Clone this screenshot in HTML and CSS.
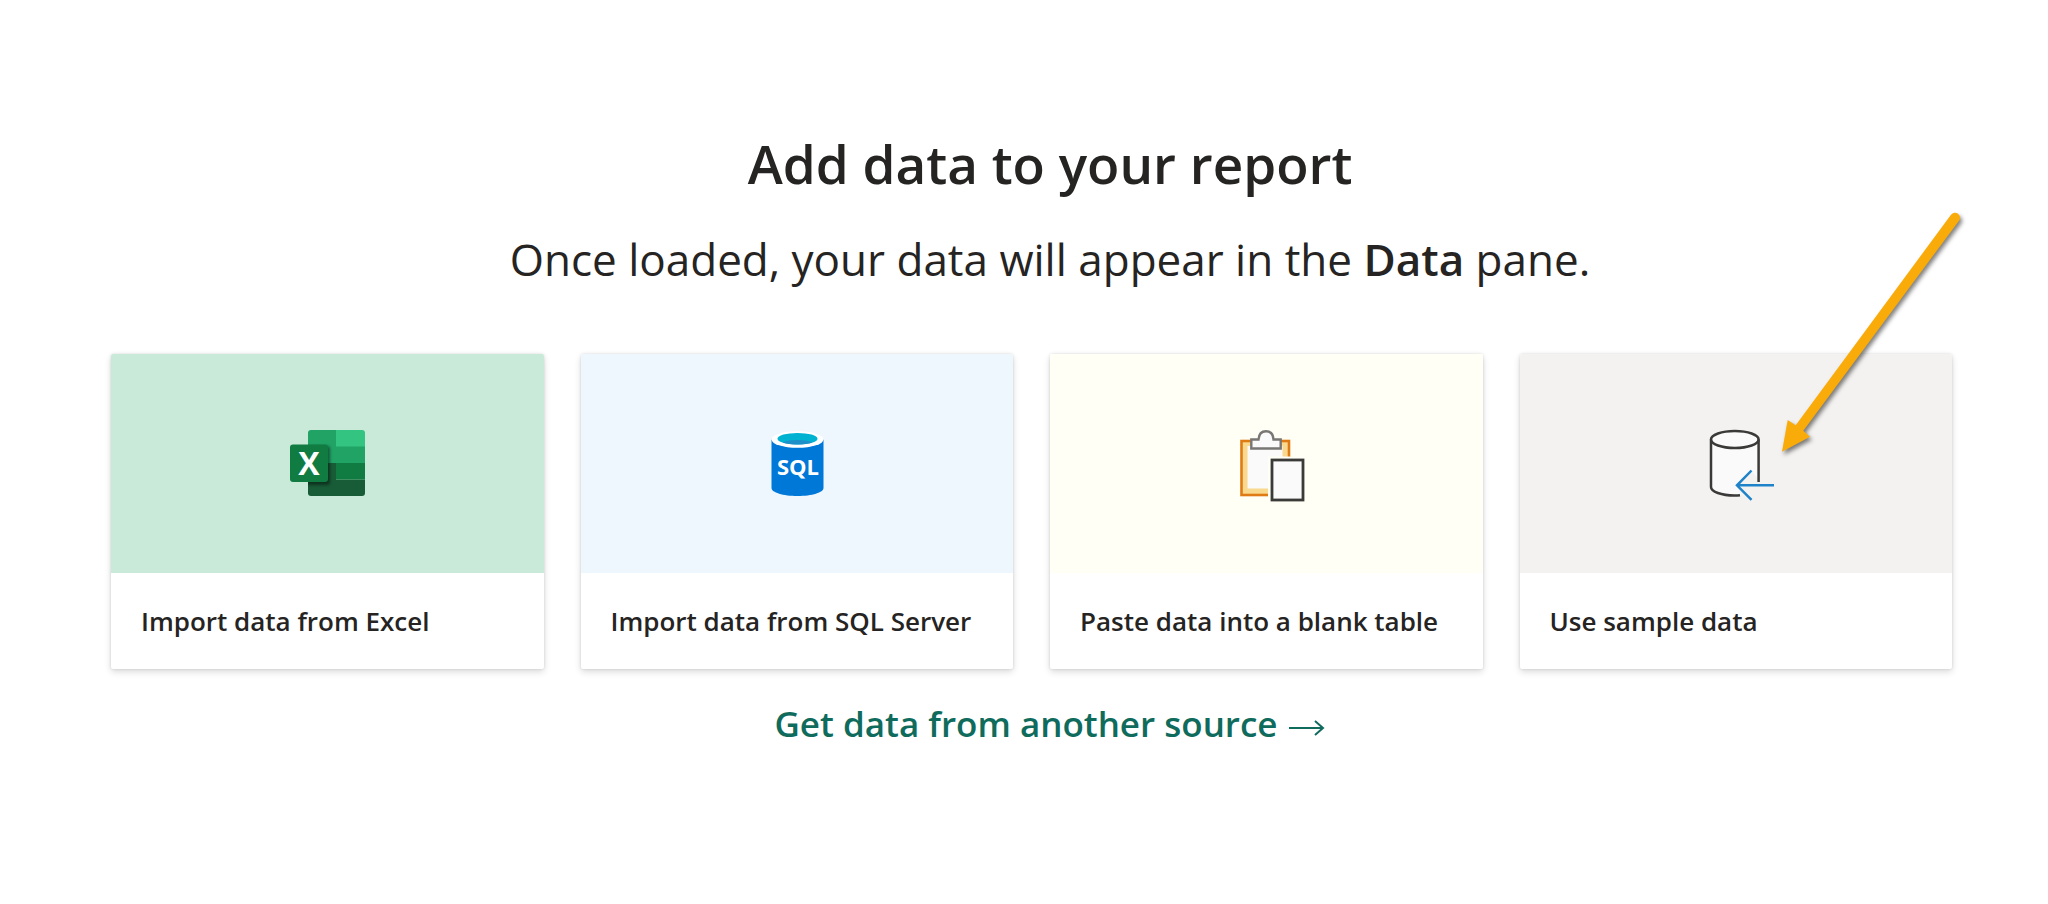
FILE: index.html
```html
<!DOCTYPE html>
<html lang="en">
<head>
<meta charset="utf-8">
<meta name="viewport" content="width=device-width, initial-scale=1">
<title>Add data to your report</title>
<link rel="stylesheet" href="styles.css">
</head>
<body>
<main class="start">
  <h1 class="title">Add data to your report</h1>
  <p class="subtitle">Once loaded, your data will appear in the <strong>Data</strong> pane.</p>
  <ul class="cards">
    <li class="card-item">
      <button class="card" type="button">
        <span class="art art-excel">
          <svg class="icon" viewBox="0 0 80 80" aria-hidden="true">
            <defs>
              <clipPath id="book"><rect x="21" y="6" width="57" height="66" rx="3"/></clipPath>
              <filter id="soft" x="-30%" y="-30%" width="160%" height="160%"><feGaussianBlur stdDeviation="1.5"/></filter>
            </defs>
            <g clip-path="url(#book)">
              <rect x="21" y="6" width="28" height="33" fill="#21a366"/>
              <rect x="49" y="6" width="29" height="17" fill="#33c481"/>
              <rect x="49" y="22.500" width="29" height="17" fill="#21a366"/>
              <rect x="21" y="39" width="28" height="17" fill="#107c41"/>
              <path d="M21 39h28v16.500h29V72H21z" fill="#185c37"/>
              <rect x="49" y="39" width="29" height="16.500" fill="#107c41"/>
              <rect x="10" y="22" width="33" height="39" rx="3" fill="#000" opacity=".45" filter="url(#soft)"/>
            </g>
            <rect x="3" y="20.500" width="38" height="37.500" rx="3" fill="#107c41"/>
            <text class="excel-letter" x="22" y="51" text-anchor="middle">X</text>
          </svg>
        </span>
        <span class="label">Import data from Excel</span>
      </button>
    </li>
    <li class="card-item">
      <button class="card" type="button">
        <span class="art art-sql">
          <svg class="icon" viewBox="0 0 80 80" aria-hidden="true">
            <path d="M14.500 15.500v48.500c0 4.500 11.600 8 26 8s26-3.500 26-8V15.500z" fill="#0078d7"/>
            <ellipse cx="40.500" cy="15.500" rx="26" ry="8.300" fill="#fff"/>
            <ellipse cx="40.500" cy="14.700" rx="20" ry="5.800" fill="#00b2d2"/>
            <path d="M25.500 18.500c8-3.200 22-3.200 30 0-7 2.700-23 2.700-30 0z" fill="#1d8fc9"/>
            <text class="sql-letters" x="41" y="51" text-anchor="middle">SQL</text>
          </svg>
        </span>
        <span class="label">Import data from SQL Server</span>
      </button>
    </li>
    <li class="card-item">
      <button class="card" type="button">
        <span class="art art-paste">
          <svg class="icon" viewBox="0 0 80 80" aria-hidden="true">
            <rect x="15.500" y="17" width="47.500" height="54" fill="#f9d98d" stroke="#df7b15" stroke-width="2.600"/>
            <rect x="21.500" y="22" width="35" height="42.500" fill="#fafafa"/>
            <path d="M25.300 15.500h7.200c.4-5.500 3.300-8.200 7.500-8.200s7.100 2.700 7.500 8.200h7.200v9H25.300z" fill="#fafafa" stroke="#797774" stroke-width="2.400"/>
            <path d="M42 32.500h26V74H42z" fill="#fffff6"/>
            <rect x="46" y="36" width="31" height="40" fill="#fafafa" stroke="#3a3a38" stroke-width="2.800"/>
          </svg>
        </span>
        <span class="label">Paste data into a blank table</span>
      </button>
    </li>
    <li class="card-item">
      <button class="card" type="button">
        <span class="art art-sample">
          <svg class="icon" viewBox="1 0 80 80" aria-hidden="true">
            <path d="M16 15.500V63c0 4.700 10.500 8.500 23.500 8.500l7-.5L41 61l15-14 7 7V15.500z" fill="#fafafa"/>
            <ellipse cx="39.800" cy="15.500" rx="23.800" ry="8.500" fill="#fafafa" stroke="#3a3a38" stroke-width="2.500"/>
            <path d="M16 15.500V63c0 4.700 10.500 8.500 23.500 8.500 2 0 4-.1 5.500-.3M63.600 15.500V58" fill="none" stroke="#3a3a38" stroke-width="2.500"/>
            <path d="M79 61.300H42M56.500 46.500 42 61.300l14.500 14.500" fill="none" stroke="#1e83c9" stroke-width="2.500"/>
          </svg>
        </span>
        <span class="label">Use sample data</span>
      </button>
      <svg class="pointer" viewBox="0 0 200 260" aria-hidden="true">
        <path d="M179 7.700 23.700 218.300l-8-5.300L10 244.700l28-15-6.700-6L187 13.700A5 5 0 0 0 179 7.700z" fill="#f9ab0a"/>
      </svg>
    </li>
  </ul>
  <a class="more" href="#">Get data from another source
    <svg class="more-arrow" viewBox="0 0 38 24" aria-hidden="true"><path d="M1 12h34M27 5l8 7-8 7" fill="none" stroke="currentColor" stroke-width="2"/></svg>
  </a>
</main>
</body>
</html>
```
FILE: styles.css
```css
* {
  box-sizing: border-box;
}

body {
  margin: 0;
  background: #fff;
  color: #252423;
  font-family: "Open Sans", "Noto Sans", sans-serif;
}

.start {
  display: flex;
  flex-direction: column;
  align-items: center;
  padding: 128px 59px 64px 111px;
}

.title {
  margin: 0;
  font-size: 53px;
  font-weight: 600;
  line-height: 72px;
}

.subtitle {
  margin: 27px 0 63px;
  font-size: 44px;
  line-height: 64px;
}

.subtitle strong {
  font-weight: 600;
}

.cards {
  display: grid;
  grid-template-columns: repeat(4, 1fr);
  gap: 37px;
  align-self: stretch;
  margin: 0;
  padding: 0 37px 0 0;
  list-style: none;
}

.card-item {
  position: relative;
  display: flex;
}

.card {
  display: flex;
  flex: 1;
  flex-direction: column;
  padding: 0;
  border: 0;
  border-radius: 2px;
  background: #fff;
  color: inherit;
  font: inherit;
  text-align: left;
  box-shadow: 0 3px 7px rgba(0, 0, 0, 0.14), 0 0 3px rgba(0, 0, 0, 0.12);
  cursor: pointer;
}

.art {
  display: flex;
  align-items: center;
  justify-content: center;
  align-self: stretch;
  height: 219px;
  border-radius: 2px 2px 0 0;
}

.art-excel {
  background: #c9ead8;
}

.art-sql {
  background: #eef6fe;
}

.art-paste {
  background: #fffff6;
}

.art-sample {
  background: #f3f2f1;
}

.icon {
  width: 80px;
  height: 80px;
}

.excel-letter {
  fill: #fff;
  font-size: 32px;
  font-weight: 700;
}

.sql-letters {
  fill: #fff;
  font-size: 22px;
  font-weight: 700;
}

.label {
  padding: 28px 30px;
  font-size: 26px;
  font-weight: 600;
  line-height: 40px;
}

.pointer {
  position: absolute;
  top: -147px;
  right: -20px;
  width: 200px;
  height: 260px;
  filter: drop-shadow(2px 3px 2px rgba(0, 0, 0, 0.5));
  pointer-events: none;
}

.more {
  display: flex;
  align-items: center;
  gap: 10px;
  margin-top: 31px;
  color: #0f6b5c;
  font-size: 35px;
  font-weight: 600;
  line-height: 48px;
  text-decoration: none;
}

.more-arrow {
  width: 38px;
  height: 24px;
  margin-top: 8px;
}
```
